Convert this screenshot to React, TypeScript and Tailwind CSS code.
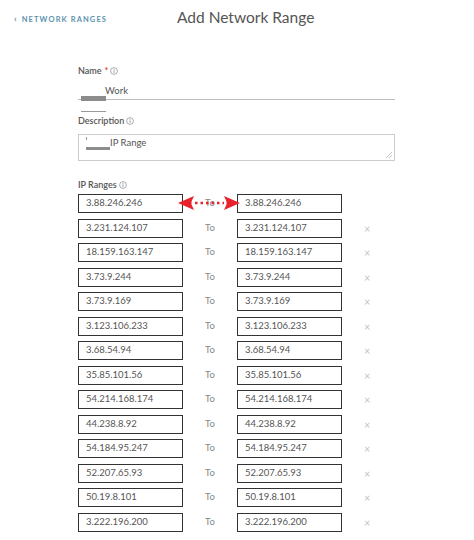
const ranges = [
  "3.88.246.246",
  "3.231.124.107",
  "18.159.163.147",
  "3.73.9.244",
  "3.73.9.169",
  "3.123.106.233",
  "3.68.54.94",
  "35.85.101.56",
  "54.214.168.174",
  "44.238.8.92",
  "54.184.95.247",
  "52.207.65.93",
  "50.19.8.101",
  "3.222.196.200",
];

function Info() {
  return (
    <svg width="8" height="8" viewBox="0 0 8 8" className="ml-[2px] inline-block">
      <circle cx="4" cy="4" r="3.4" fill="none" stroke="#888" strokeWidth="0.7" />
      <line x1="4" y1="3.3" x2="4" y2="6" stroke="#888" strokeWidth="0.8" />
      <circle cx="4" cy="2.2" r="0.5" fill="#888" />
    </svg>
  );
}

function Arrow() {
  return (
    <svg
      width="68"
      height="18"
      viewBox="0 0 68 18"
      className="absolute left-[175px] top-[194px]"
    >
      <polygon points="3,9 19,2 16.5,7.5 16.5,10.5 19,16" fill="#e8232c" />
      <polygon points="65,9 49,2 51.5,7.5 51.5,10.5 49,16" fill="#e8232c" />
      <line
        x1="20"
        y1="9"
        x2="49"
        y2="9"
        stroke="#e8232c"
        strokeWidth="2.4"
        strokeDasharray="2.5 3"
      />
    </svg>
  );
}

export default function App() {
  return (
    <div
      className="relative w-[474px] h-[540px] bg-white overflow-hidden text-[#444]"
      style={{ fontFamily: "Lato, 'Open Sans', sans-serif" }}
    >
      <div className="flex items-start h-[36px]">
        <div className="pl-[14px] pt-[14px] w-[177px] text-[7.5px] leading-[10px] font-bold tracking-[1.1px] text-[#5b93ad]">
          <span className="mr-[4px] text-[9px]">‹</span>NETWORK RANGES
        </div>
        <div className="pt-[7px] text-[15.5px] leading-[20px] text-[#555]">
          Add Network Range
        </div>
      </div>

      <div className="ml-[78px] w-[317px] pt-[29px]">
        <div className="flex items-center text-[9px] leading-[12px] font-semibold text-[#555]">
          Name<span className="ml-[3px] text-[#d33]">*</span>
          <Info />
        </div>

        <div className="relative mt-[8px] h-[15px] border-b border-[#bdbdbd]">
          <div className="pl-[27px] text-[9.5px] leading-[12px] text-[#555]">Work</div>
          <div className="absolute left-[3px] top-[11px] w-[25px] h-[5px] bg-[#8c8c8c]" />
          <div className="absolute left-[3px] top-[26px] w-[25px] h-px bg-[#999]" />
        </div>

        <div className="mt-[15px] flex items-center text-[9px] leading-[12px] font-semibold text-[#555]">
          Description
          <Info />
        </div>

        <div className="relative mt-[7px] h-[27px] border border-[#ccc]">
          <div className="pl-[31px] pt-[2px] text-[9.5px] leading-[12px] text-[#555]">IP Range</div>
          <div className="absolute left-[7px] top-[12px] w-[24px] h-[2.5px] bg-[#8c8c8c]" />
          <div className="absolute left-[7px] top-[2px] w-px h-[3px] bg-[#999]" />
          <svg width="8" height="8" viewBox="0 0 8 8" className="absolute right-[1px] bottom-[1px]">
            <line x1="1" y1="7" x2="7" y2="1" stroke="#aaa" strokeWidth="0.7" />
            <line x1="4" y1="7" x2="7" y2="4" stroke="#aaa" strokeWidth="0.7" />
          </svg>
        </div>

        <div className="mt-[18px] flex items-center text-[9px] leading-[12px] font-semibold text-[#555]">
          IP Ranges
          <Info />
        </div>

        <div className="mt-[3px] flex flex-col gap-[5.5px]">
          {ranges.map((ip, i) => (
            <div key={ip} className="flex items-center">
              <div className="w-[105px] h-[19px] border-[1.5px] border-[#333] pl-[7px] text-[9.5px] leading-[16px] text-[#555]">
                {ip}
              </div>
              <div className="w-[54px] text-center text-[9.5px] text-[#888]">To</div>
              <div className="w-[105px] h-[19px] border-[1.5px] border-[#333] pl-[7px] text-[9.5px] leading-[16px] text-[#555]">
                {ip}
              </div>
              {i > 0 && (
                <div className="ml-[22px] text-[11px] leading-none text-[#c4c4c4]">×</div>
              )}
            </div>
          ))}
        </div>
      </div>

      <Arrow />
    </div>
  );
}
